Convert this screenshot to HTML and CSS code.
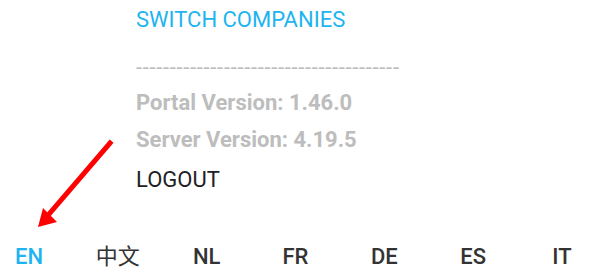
FILE: index.html
```html
<!DOCTYPE html>
<html lang="en">
<head>
    <meta charset="UTF-8">
    <meta name="viewport" content="width=device-width, initial-scale=1.0">
    <title>Menu</title>
    <link rel="stylesheet" href="styles.css">
</head>
<body>
    <div class="menu">
        <div class="item switch">SWITCH COMPANIES</div>
        <div class="item divider">---------------------------------------</div>
        <div class="item version">Portal Version: 1.46.0</div>
        <div class="item version server">Server Version: 4.19.5</div>
        <div class="item logout">LOGOUT</div>
    </div>

    <div class="languages">
        <span class="lang active">EN</span>
        <span class="lang cjk">中文</span>
        <span class="lang">NL</span>
        <span class="lang">FR</span>
        <span class="lang">DE</span>
        <span class="lang">ES</span>
        <span class="lang">IT</span>
    </div>

    <!-- pointer arrow -->
    <svg class="arrow" width="130" height="240" viewBox="0 0 130 240">
        <line x1="110" y1="143" x2="50" y2="213" stroke="#ff0000" stroke-width="5" stroke-linecap="square"/>
        <polygon points="38,227 43,208 57,222" fill="#ff0000"/>
    </svg>
</body>
</html>
```

FILE: styles.css
```css
body {
    margin: 0;
    font-family: Roboto, "Noto Sans CJK SC", "Liberation Sans", sans-serif;
    font-size: 22px;
    background: #fff;
    position: relative;
    width: 593px;
    height: 280px;
    overflow: hidden;
}
.menu {
    padding-left: 136px;
    padding-top: 2px;
}
.item {
    line-height: 36px;
    white-space: nowrap;
}
.switch {
    color: #1eb4ef;
}
.divider {
    color: #bdbdbd;
    line-height: 24px;
    margin-top: 18px;
    letter-spacing: 0.68px;
}
.version {
    color: #bdbdbd;
    font-weight: bold;
    margin-top: 5px;
}
.server {
    margin-top: 1px;
}
.logout {
    color: #212121;
    margin-top: 4px;
}
.languages {
    display: flex;
    justify-content: space-between;
    width: 591px;
    margin-top: 41px;
}
.lang {
    width: 58px;
    text-align: center;
    line-height: 36px;
    font-weight: 500;
    color: #333;
}
.lang.cjk {
    font-weight: 400;
}
.lang.active {
    color: #1eb4ef;
}
.arrow {
    position: absolute;
    left: 0;
    top: 0;
}
```
